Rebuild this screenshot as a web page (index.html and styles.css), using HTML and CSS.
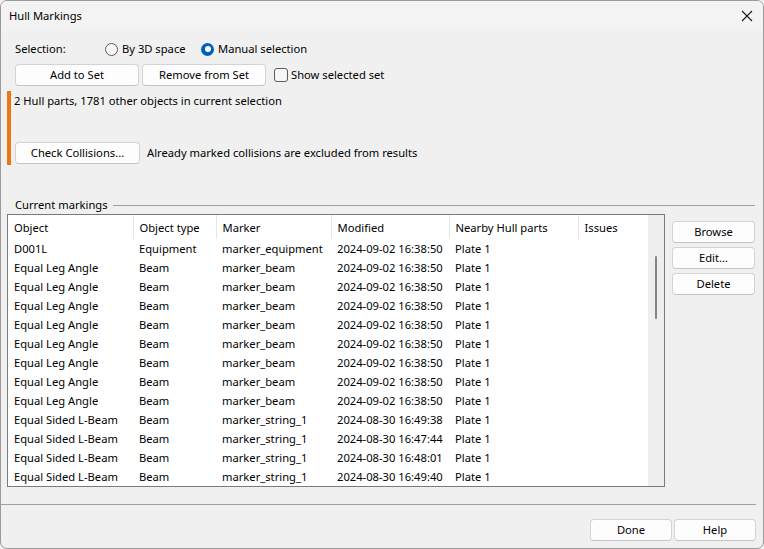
FILE: index.html
```html
<!DOCTYPE html>
<html>
<head>
<meta charset="utf-8">
<link rel="stylesheet" href="styles.css">
</head>
<body>
<div class="window">
  <div class="titlebar">
    <span class="title">Hull Markings</span>
    <svg class="close" width="12" height="12" viewBox="0 0 12 12"><path d="M1 1 L11 11 M11 1 L1 11" stroke="#1a1a1a" stroke-width="1.1" fill="none"/></svg>
  </div>
  <div class="content">
    <div class="sel-row">
      <span class="sel-label">Selection:</span>
      <label class="radio r1"><span class="rb"></span>By 3D space</label>
      <label class="radio"><span class="rb on"></span>Manual selection</label>
    </div>
    <div class="btn-row">
      <button class="btn w123">Add to Set</button>
      <button class="btn w123">Remove from Set</button>
      <label class="check"><span class="cb"></span>Show selected set</label>
    </div>
    <div class="info">
      <div class="info-text">2 Hull parts, 1781 other objects in current selection</div>
      <div class="coll-row">
        <button class="btn w124">Check Collisions...</button>
        <span class="coll-text">Already marked collisions are excluded from results</span>
      </div>
    </div>
    <div class="group-head"><span>Current markings</span><div class="gline"></div></div>
    <div class="table-area">
      <div class="list">
        <div class="list-body">
          <table class="grid">
            <colgroup><col class="c1"><col class="c2"><col class="c3"><col class="c4"><col class="c5"><col class="c6"></colgroup>
            <thead><tr><th>Object</th><th>Object type</th><th>Marker</th><th>Modified</th><th>Nearby Hull parts</th><th>Issues</th></tr></thead>
            <tbody>
              <tr><td>D001L</td><td>Equipment</td><td>marker_equipment</td><td>2024-09-02 16:38:50</td><td>Plate 1</td><td></td></tr>
              <tr><td>Equal Leg Angle</td><td>Beam</td><td>marker_beam</td><td>2024-09-02 16:38:50</td><td>Plate 1</td><td></td></tr>
              <tr><td>Equal Leg Angle</td><td>Beam</td><td>marker_beam</td><td>2024-09-02 16:38:50</td><td>Plate 1</td><td></td></tr>
              <tr><td>Equal Leg Angle</td><td>Beam</td><td>marker_beam</td><td>2024-09-02 16:38:50</td><td>Plate 1</td><td></td></tr>
              <tr><td>Equal Leg Angle</td><td>Beam</td><td>marker_beam</td><td>2024-09-02 16:38:50</td><td>Plate 1</td><td></td></tr>
              <tr><td>Equal Leg Angle</td><td>Beam</td><td>marker_beam</td><td>2024-09-02 16:38:50</td><td>Plate 1</td><td></td></tr>
              <tr><td>Equal Leg Angle</td><td>Beam</td><td>marker_beam</td><td>2024-09-02 16:38:50</td><td>Plate 1</td><td></td></tr>
              <tr><td>Equal Leg Angle</td><td>Beam</td><td>marker_beam</td><td>2024-09-02 16:38:50</td><td>Plate 1</td><td></td></tr>
              <tr><td>Equal Leg Angle</td><td>Beam</td><td>marker_beam</td><td>2024-09-02 16:38:50</td><td>Plate 1</td><td></td></tr>
              <tr><td>Equal Sided L-Beam</td><td>Beam</td><td>marker_string_1</td><td>2024-08-30 16:49:38</td><td>Plate 1</td><td></td></tr>
              <tr><td>Equal Sided L-Beam</td><td>Beam</td><td>marker_string_1</td><td>2024-08-30 16:47:44</td><td>Plate 1</td><td></td></tr>
              <tr><td>Equal Sided L-Beam</td><td>Beam</td><td>marker_string_1</td><td>2024-08-30 16:48:01</td><td>Plate 1</td><td></td></tr>
              <tr><td>Equal Sided L-Beam</td><td>Beam</td><td>marker_string_1</td><td>2024-08-30 16:49:40</td><td>Plate 1</td><td></td></tr>
            </tbody>
          </table>
        </div>
        <div class="scroll"><div class="thumb"></div></div>
      </div>
      <div class="side">
        <button class="btn side-btn">Browse</button>
        <button class="btn side-btn">Edit...</button>
        <button class="btn side-btn">Delete</button>
      </div>
    </div>
  </div>
  <div class="sep"></div>
  <div class="footer">
    <button class="btn foot-btn">Done</button>
    <button class="btn foot-btn">Help</button>
  </div>
</div>
</body>
</html>
```

FILE: styles.css
```css
* { box-sizing: border-box; }
html, body { margin: 0; padding: 0; background: #f0f0f0; }
body {
  font-family: "Noto Sans", "Open Sans", sans-serif;
  font-size: 11.2px;
  line-height: 16px;
  color: #000;
}
.window {
  width: 764px;
  height: 549px;
  border: 1px solid #9a9a9a;
  border-radius: 7px;
  background: #f0f0f0;
  display: flex;
  flex-direction: column;
  overflow: hidden;
}
.titlebar {
  height: 30px;
  background: #f3f3f3;
  display: flex;
  align-items: center;
  justify-content: space-between;
  padding: 0 10px 0 8px;
  flex: none;
}
.title { margin-top: -1px; }
.close { display: block; margin-top: -1px; }
.content {
  padding: 0 8px 0 14px;
  flex: 1;
  display: flex;
  flex-direction: column;
}
.sel-row {
  margin-top: 8px;
  height: 20px;
  display: flex;
  align-items: center;
}
.sel-label { width: 90px; }
.radio { display: flex; align-items: center; }
.r1 { width: 96px; }
.rb {
  width: 13px; height: 13px;
  border: 1px solid #5c5c5c;
  border-radius: 50%;
  background: #f7f7f7;
  margin-right: 4px;
  display: inline-block;
  flex: none;
}
.rb.on {
  border: none;
  background: #005fb8;
  position: relative;
}
.rb.on::after {
  content: "";
  position: absolute;
  left: 3.5px; top: 3.5px;
  width: 6px; height: 6px;
  border-radius: 50%;
  background: #fff;
}
.btn-row {
  margin-top: 5px;
  height: 22px;
  display: flex;
  align-items: center;
}
.btn {
  font-family: inherit;
  font-size: 11.2px;
  line-height: 16px;
  color: #000;
  background: #fdfdfd;
  border: 1px solid #d3d3d3;
  border-bottom-color: #c4c4c4;
  border-radius: 4px;
  height: 22px;
  padding: 0;
  margin: 0;
}
.w123 { width: 124px; margin-right: 3px; }
.w124 { width: 125px; }
.check { display: flex; align-items: center; margin-left: 5px; }
.cb {
  width: 14px; height: 14px;
  border: 1px solid #5c5c5c;
  border-radius: 3px;
  background: #f7f7f7;
  margin-right: 3px;
}
.info {
  margin-top: 5px;
  margin-left: -8px;
  border-left: 4px solid #e8780f;
  height: 74px;
  padding-left: 3px;
  padding-top: 2px;
}
.coll-row {
  margin-top: 33px;
  display: flex;
  align-items: center;
  margin-left: 1px;
}
.coll-text { margin-left: 7px; }
.group-head {
  margin-top: 32px;
  display: flex;
  align-items: center;
  height: 16px;
}
.gline { flex: 1; height: 1px; background: #a0a0a0; margin-left: 5px; margin-top: 1px; }
.table-area {
  margin-top: 1px;
  display: flex;
  margin-left: -8px;
}
.list {
  width: 659px;
  height: 273px;
  border: 1px solid #7a7a7a;
  background: #fff;
  display: flex;
  overflow: hidden;
}
.list-body { flex: 1; overflow: hidden; }
.grid {
  border-collapse: collapse;
  table-layout: fixed;
  width: 641px;
}
.c1 { width: 125px; }
.c2 { width: 83px; }
.c3 { width: 115px; }
.c4 { width: 118px; }
.c5 { width: 129px; }
.c6 { width: 71px; }
.grid th {
  font-weight: normal;
  text-align: left;
  height: 24px;
  padding: 1px 6px 0;
  border-right: 1px solid #e5e5e5;
  white-space: nowrap;
  overflow: hidden;
}
.grid th:last-child { border-right: none; }
.grid td {
  height: 19px;
  padding: 0 6px;
  white-space: nowrap;
  overflow: hidden;
}
.scroll {
  width: 16px;
  background: #eeeeee;
  position: relative;
  flex: none;
}
.thumb {
  position: absolute;
  left: 7px;
  top: 41px;
  width: 2px;
  height: 63px;
  background: #858585;
  border-radius: 1px;
}
.side {
  margin-left: 7px;
  margin-top: 7px;
  display: flex;
  flex-direction: column;
  gap: 4px;
}
.side-btn { width: 83px; }
.sep {
  height: 1px;
  background: #a0a0a0;
  margin: 0 7px 0 0;
  flex: none;
}
.footer {
  height: 43px;
  flex: none;
  display: flex;
  justify-content: flex-end;
  align-items: flex-start;
  padding: 14px 7px 0 0;
  gap: 2px;
}
.foot-btn { width: 82px; }
```
